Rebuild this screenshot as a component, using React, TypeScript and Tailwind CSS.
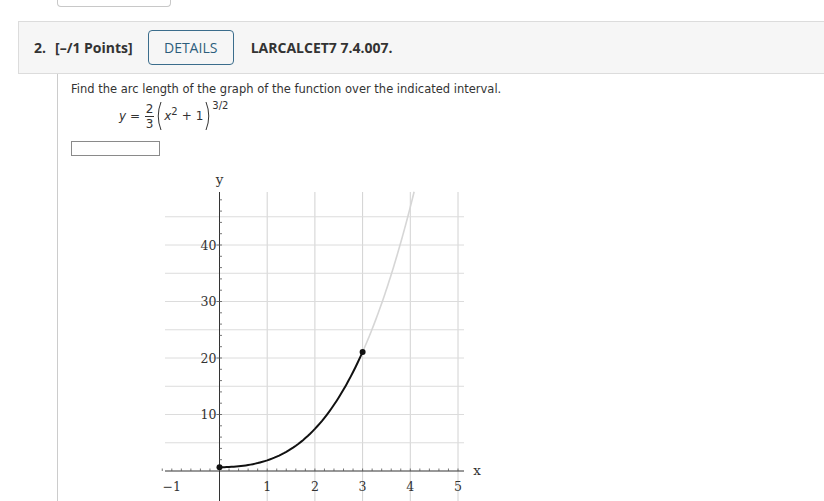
import React from "react";

const X0 = 68.5;
const SX = 47.7;
const Y0 = 306;
const SY = 5.65;

const px = (x: number) => X0 + x * SX;
const py = (y: number) => Y0 - y * SY;
const f = (x: number) => (2 / 3) * Math.pow(x * x + 1, 1.5);

function curve(a: number, b: number) {
  const pts: string[] = [];
  const n = 60;
  for (let i = 0; i <= n; i++) {
    const x = a + ((b - a) * i) / n;
    pts.push(`${px(x).toFixed(2)},${py(f(x)).toFixed(2)}`);
  }
  return "M" + pts.join(" L");
}

function Graph() {
  const minorX: number[] = [];
  for (let i = -6; i <= 25; i++) minorX.push(i * 0.2);
  const minorY: number[] = [];
  for (let i = 1; i <= 24; i++) minorY.push(i * 2);

  return (
    <svg width="340" height="336" viewBox="0 0 340 336" className="block">
      {[1, 2, 3, 4, 5].map((x) => (
        <line key={"gx" + x} x1={px(x)} x2={px(x)} y1={27} y2={336} stroke="#d2d2d2" strokeWidth="1" />
      ))}
      {[5, 10, 15, 20, 25, 30, 35, 40, 45].map((y) => (
        <line key={"gy" + y} x1={14} x2={313} y1={py(y)} y2={py(y)} stroke="#dcdcdc" strokeWidth="1" />
      ))}
      <line x1={14} x2={313} y1={Y0} y2={Y0} stroke="#333" strokeWidth="1" />
      <line x1={X0} x2={X0} y1={27} y2={336} stroke="#333" strokeWidth="1" />
      {minorX.map((x) => (
        <line key={"tx" + x} x1={px(x)} x2={px(x)} y1={Y0 - 2.5} y2={Y0} stroke="#555" strokeWidth="0.8" />
      ))}
      {minorY.map((y) => (
        <line
          key={"ty" + y}
          x1={y % 10 === 0 ? X0 - 3 : X0}
          x2={X0 + 2.5}
          y1={py(y)}
          y2={py(y)}
          stroke="#555"
          strokeWidth="0.8"
        />
      ))}
      <path d={curve(3, 4.08)} fill="none" stroke="#d6d6d6" strokeWidth="1.6" />
      <path d={curve(0, 3)} fill="none" stroke="#111" strokeWidth="2" />
      <circle cx={px(0)} cy={py(f(0))} r="3" fill="#111" />
      <circle cx={px(3)} cy={py(f(3))} r="3" fill="#111" />
      <g fontFamily="'DejaVu Serif', serif" fontSize="12.5" fill="#333">
        {[1, 2, 3, 4, 5].map((x) => (
          <text key={"lx" + x} x={px(x)} y={326} textAnchor="middle">
            {x}
          </text>
        ))}
        <text x={px(-1)} y={326} textAnchor="middle">
          −1
        </text>
        {[10, 20, 30, 40].map((y) => (
          <text key={"ly" + y} x={X0 - 3} y={py(y) + 4.5} textAnchor="end">
            {y}
          </text>
        ))}
        <text x={X0} y={19} textAnchor="middle" fontSize="13.5">
          y
        </text>
        <text x={326} y={310} textAnchor="middle" fontSize="13.5">
          x
        </text>
      </g>
    </svg>
  );
}

function Paren({ right }: { right?: boolean }) {
  return (
    <svg width="8" height="30" viewBox="0 0 8 30" className="block">
      <path
        d={right ? "M2 1 Q7.5 15 2 29" : "M6 1 Q0.5 15 6 29"}
        fill="none"
        stroke="#333"
        strokeWidth="1"
      />
    </svg>
  );
}

function Equation() {
  return (
    <div
      className="ml-[48px] mt-[5px] flex items-center h-[30px] text-[12px] text-[#333]"
      style={{ fontFamily: "'DejaVu Sans', Verdana, sans-serif" }}
    >
      <span className="italic">y</span>
      <span className="ml-[4px]">=</span>
      <span className="ml-[5px] flex flex-col items-center leading-none text-[12px]">
        <span className="pb-[1px]">2</span>
        <span className="w-[9px] border-t border-[#333]"></span>
        <span className="pt-[1px]">3</span>
      </span>
      <span className="ml-[1px]">
        <Paren />
      </span>
      <span className="ml-[1px] italic">x</span>
      <span className="text-[10px] -mt-[9px]">2</span>
      <span className="ml-[4px]">+</span>
      <span className="ml-[4px]">1</span>
      <span className="ml-[1px]">
        <Paren right />
      </span>
      <span className="text-[10px] -mt-[22px]">3/2</span>
    </div>
  );
}

export default function App() {
  return (
    <div className="w-[824px] h-[501px] overflow-hidden bg-white" style={{ fontFamily: "'Open Sans', sans-serif" }}>
      <div className="ml-[57px] w-[114px] h-[7px] border border-t-0 border-[#c8c8c8] rounded-b-[4px]"></div>
      <div className="mt-[14px] ml-[18px] h-[53px] bg-[#f6f6f6] border-y border-l border-[#dcdcdc] flex items-center pl-[15px] text-[14px] text-[#333]">
        <span className="font-bold">2.</span>
        <span className="ml-[9px] font-bold">[–/1 Points]</span>
        <span className="ml-[15px] h-[35px] w-[86px] flex items-center justify-center border border-[#3b6d8c] rounded-[4px] text-[#2c5d7c] font-medium">
          DETAILS
        </span>
        <span className="ml-[17px] font-bold">LARCALCET7 7.4.007.</span>
      </div>
      <div className="ml-[57px] h-[428px] border-l border-[#cccccc] pl-[13px] pt-[8px]">
        <p
          className="text-[11.5px] text-[#333] leading-[14px]"
          style={{ fontFamily: "'DejaVu Sans', Verdana, sans-serif" }}
        >
          Find the arc length of the graph of the function over the indicated interval.
        </p>
        <Equation />
        <div className="mt-[10px] w-[89px] h-[15px] border border-[#8a8a8a]"></div>
        <div className="ml-[80px] mt-[9px]">
          <Graph />
        </div>
      </div>
    </div>
  );
}
